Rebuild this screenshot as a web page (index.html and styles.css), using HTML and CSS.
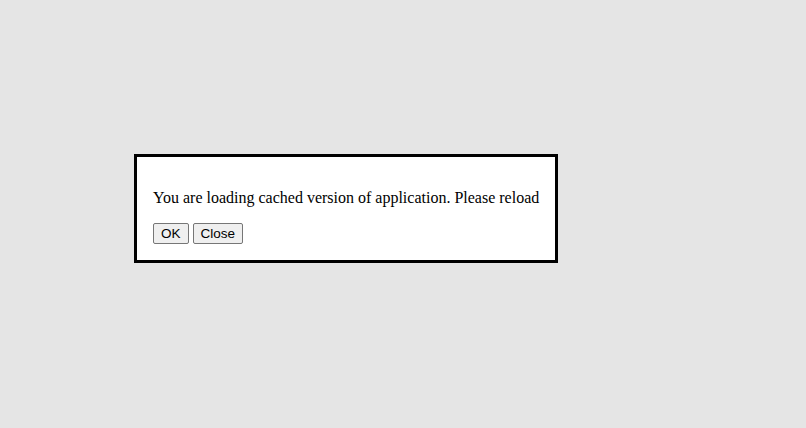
FILE: index.html
```html
<!DOCTYPE html>
<html>
<head>
<meta charset="utf-8">
<link rel="stylesheet" href="styles.css">
</head>
<body class="page">
  <div class="dialog">
    <p class="message">You are loading cached version of application. Please reload</p>
    <div class="actions">
      <button class="btn">OK</button>
      <button class="btn">Close</button>
    </div>
  </div>
</body>
</html>
```

FILE: styles.css
```css
html, body {
  margin: 0;
  padding: 0;
}
.page {
  background: #e5e5e5;
  width: 806px;
  height: 428px;
  overflow: hidden;
  padding-top: 154px;
  padding-left: 134px;
  box-sizing: border-box;
  font-family: "Liberation Serif", "Times New Roman", serif;
  font-size: 16px;
  color: #000;
}
.dialog {
  display: inline-block;
  border: 3px solid #000;
  background: #fff;
  padding: 16px;
}
.message {
  margin: 16px 0;
  line-height: normal;
  white-space: nowrap;
}
.actions {
  display: flex;
  gap: 4px;
}
.btn {
  font-family: "Liberation Sans", Arial, sans-serif;
  font-size: 13.5px;
  color: #000;
  background: #efefef;
  border: 1px solid #767676;
  border-radius: 2px;
  padding: 0 7px;
  margin: 0;
  height: 21px;
  line-height: normal;
}
```
